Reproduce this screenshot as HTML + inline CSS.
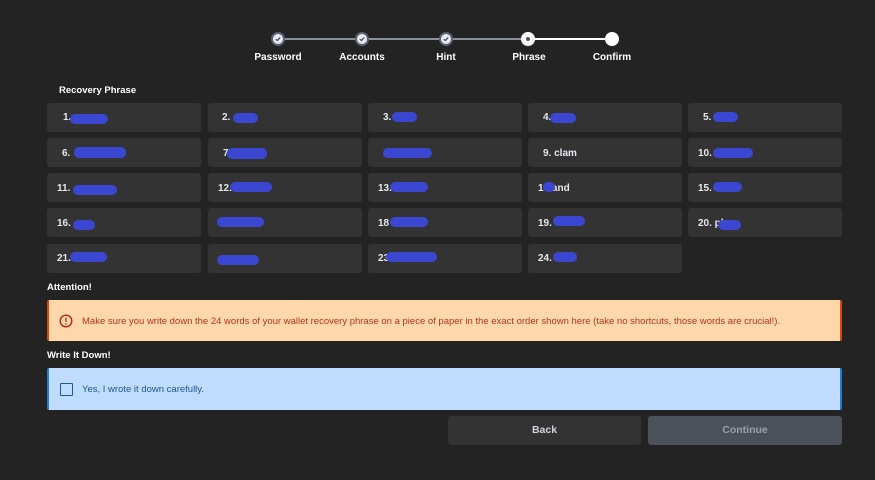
<!DOCTYPE html>
<html><head><meta charset="utf-8"><style>
*{margin:0;padding:0;box-sizing:border-box}
body{width:875px;height:480px;background:#232323;font-family:"Liberation Sans",sans-serif;position:relative;overflow:hidden;color:#fff}
.a{position:absolute}
.c{position:absolute;background:#333333;border-radius:3px;width:154px;height:29px}
.n{position:absolute;font-size:10px;font-weight:bold;color:#e6e8ee}
.b{position:absolute;background:#3b47d0;height:10px;border-radius:5px}
.st{position:absolute;top:32px;width:14px;height:14px;border-radius:50%;background:#e8ebf2;border:2px solid #5c6272}
.lb{position:absolute;top:52px;font-size:10px;font-weight:bold;width:80px;text-align:center}
.h{position:absolute;font-size:9.5px;font-weight:bold}
</style></head><body>
<div class="a" style="left:278px;top:38px;width:250px;height:2px;background:#8a90a0"></div>
<div class="a" style="left:528px;top:38px;width:84px;height:2px;background:#fff"></div>
<div class="st" style="left:271px"><svg width="10" height="10" style="position:absolute;left:0;top:0" viewBox="0 0 10 10"><path d="M2.8 5.2 4.3 6.6 7.2 3.4" stroke="#4a5060" stroke-width="1.3" fill="none"/></svg></div>
<div class="st" style="left:355px"><svg width="10" height="10" style="position:absolute;left:0;top:0" viewBox="0 0 10 10"><path d="M2.8 5.2 4.3 6.6 7.2 3.4" stroke="#4a5060" stroke-width="1.3" fill="none"/></svg></div>
<div class="st" style="left:439px"><svg width="10" height="10" style="position:absolute;left:0;top:0" viewBox="0 0 10 10"><path d="M2.8 5.2 4.3 6.6 7.2 3.4" stroke="#4a5060" stroke-width="1.3" fill="none"/></svg></div>
<div class="st" style="left:521px;border-color:#fff;background:#4a5060;box-shadow:inset 0 0 0 3px #fff"></div>
<div class="st" style="left:605px;border-color:#fff;background:#fff"></div>
<div class="lb" style="left:238px">Password</div>
<div class="lb" style="left:322px">Accounts</div>
<div class="lb" style="left:406px">Hint</div>
<div class="lb" style="left:489px">Phrase</div>
<div class="lb" style="left:572px">Confirm</div>
<div class="h" style="left:59px;top:85px">Recovery Phrase</div>

<div class="c" style="left:47px;top:103px"></div><div class="c" style="left:208px;top:103px"></div><div class="c" style="left:368px;top:103px"></div><div class="c" style="left:528px;top:103px"></div><div class="c" style="left:688px;top:103px"></div>
<div class="c" style="left:47px;top:138px"></div><div class="c" style="left:208px;top:138px"></div><div class="c" style="left:368px;top:138px"></div><div class="c" style="left:528px;top:138px"></div><div class="c" style="left:688px;top:138px"></div>
<div class="c" style="left:47px;top:173px"></div><div class="c" style="left:208px;top:173px"></div><div class="c" style="left:368px;top:173px"></div><div class="c" style="left:528px;top:173px"></div><div class="c" style="left:688px;top:173px"></div>
<div class="c" style="left:47px;top:208px"></div><div class="c" style="left:208px;top:208px"></div><div class="c" style="left:368px;top:208px"></div><div class="c" style="left:528px;top:208px"></div><div class="c" style="left:688px;top:208px"></div>
<div class="c" style="left:47px;top:244px"></div><div class="c" style="left:208px;top:244px"></div><div class="c" style="left:368px;top:244px"></div><div class="c" style="left:528px;top:244px"></div>

<div class="n" style="left:63px;top:112px">1.</div><div class="b" style="left:70px;top:114px;width:38px"></div>
<div class="n" style="left:222px;top:112px">2.</div><div class="b" style="left:233px;top:113px;width:25px"></div>
<div class="n" style="left:383px;top:112px">3.</div><div class="b" style="left:392px;top:112px;width:25px"></div>
<div class="n" style="left:543px;top:112px">4.</div><div class="b" style="left:550px;top:113px;width:26px"></div>
<div class="n" style="left:703px;top:112px">5.</div><div class="b" style="left:713px;top:112px;width:25px"></div>

<div class="n" style="left:62px;top:148px">6.</div><div class="b" style="left:74px;top:147px;width:52px;height:11px"></div>
<div class="n" style="left:223px;top:148px">7</div><div class="b" style="left:227px;top:148px;width:40px;height:11px"></div>
<div class="b" style="left:383px;top:148px;width:49px"></div>
<div class="n" style="left:543px;top:148px">9. clam</div>
<div class="n" style="left:698px;top:148px">10.</div><div class="b" style="left:713px;top:148px;width:40px"></div>

<div class="n" style="left:57px;top:183px">11.</div><div class="b" style="left:73px;top:185px;width:44px"></div>
<div class="n" style="left:218px;top:183px">12.</div><div class="b" style="left:230px;top:182px;width:42px"></div>
<div class="n" style="left:378px;top:183px">13.</div><div class="b" style="left:390px;top:182px;width:38px"></div>
<div class="n" style="left:538px;top:183px">1 sand</div><div class="b" style="left:543px;top:182px;width:12px"></div>
<div class="n" style="left:698px;top:183px">15.</div><div class="b" style="left:713px;top:182px;width:29px"></div>

<div class="n" style="left:57px;top:218px">16.</div><div class="b" style="left:73px;top:220px;width:22px"></div>
<div class="b" style="left:217px;top:217px;width:47px"></div>
<div class="n" style="left:378px;top:218px">18</div><div class="b" style="left:390px;top:217px;width:38px"></div>
<div class="n" style="left:538px;top:218px">19.</div><div class="b" style="left:553px;top:216px;width:32px"></div>
<div class="n" style="left:698px;top:218px">20. plu</div><div class="b" style="left:718px;top:220px;width:23px"></div>

<div class="n" style="left:57px;top:253px">21.</div><div class="b" style="left:70px;top:252px;width:37px"></div>
<div class="b" style="left:217px;top:255px;width:42px"></div>
<div class="n" style="left:378px;top:253px">23.</div><div class="b" style="left:386px;top:252px;width:51px"></div>
<div class="n" style="left:538px;top:253px">24.</div><div class="b" style="left:553px;top:252px;width:24px"></div>

<div class="h" style="left:47px;top:282px">Attention!</div>
<div class="a" style="left:47px;top:300px;width:795px;height:41px;background:#fed7aa;border-left:2px solid #d9480f;border-right:2px solid #d9480f;border-radius:2px"></div>
<svg class="a" style="left:59px;top:314px" width="14" height="14" viewBox="0 0 14 14"><circle cx="7" cy="7" r="5.8" fill="none" stroke="#b02a1a" stroke-width="1.4"/><path d="M7 3.8v4" stroke="#b02a1a" stroke-width="1.4"/><circle cx="7" cy="10" r=".8" fill="#b02a1a"/></svg>
<div class="a" style="left:82px;top:316px;font-size:9.5px;color:#b3351e">Make sure you write down the 24 words of your wallet recovery phrase on a piece of paper in the exact order shown here (take no shortcuts, those words are crucial!).</div>
<div class="h" style="left:47px;top:350px">Write It Down!</div>
<div class="a" style="left:47px;top:368px;width:795px;height:42px;background:#bfdbfe;border-left:2px solid #1c7ed6;border-right:2px solid #1c7ed6;border-radius:2px"></div>
<div class="a" style="left:60px;top:383px;width:13px;height:13px;border:1.5px solid #1e5a8a;border-radius:1px"></div>
<div class="a" style="left:82px;top:384px;font-size:9.5px;color:#1e5a8a">Yes, I wrote it down carefully.</div>
<div class="a" style="left:448px;top:416px;width:193px;height:29px;background:#333333;border-radius:3px;font-size:10.5px;font-weight:bold;color:#d0d3da;text-align:center;line-height:29px">Back</div>
<div class="a" style="left:648px;top:416px;width:194px;height:29px;background:#4c5058;border-radius:3px;font-size:10.5px;font-weight:bold;color:#9aa0aa;text-align:center;line-height:29px">Continue</div>
</body></html>
